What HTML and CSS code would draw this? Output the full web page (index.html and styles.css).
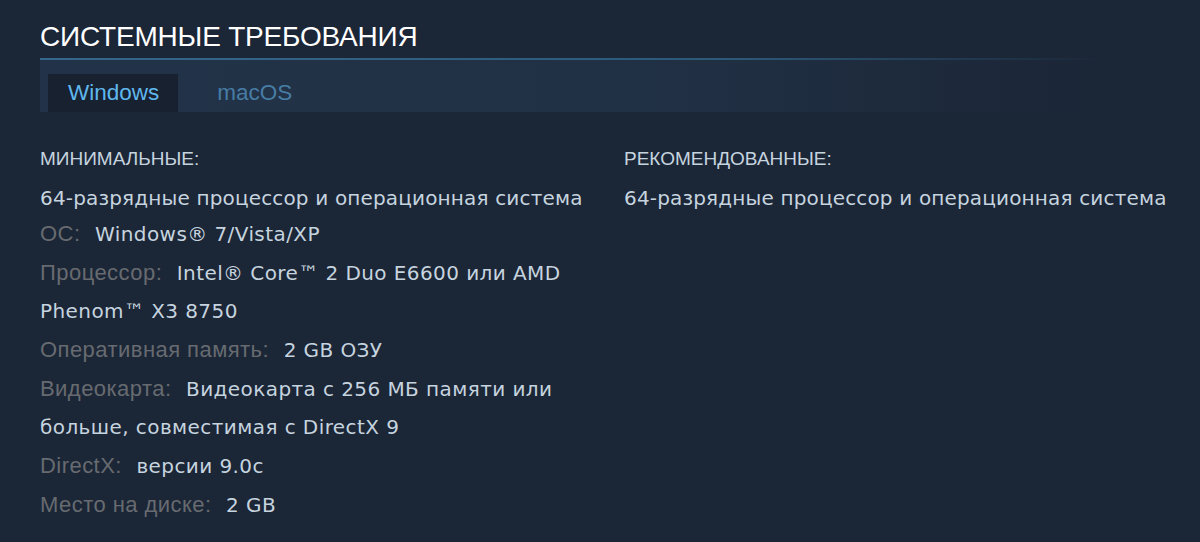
FILE: index.html
```html
<!DOCTYPE html>
<html lang="ru">
<head>
<meta charset="utf-8">
<link rel="stylesheet" href="styles.css">
</head>
<body>
<div class="sysreq">
  <h2 class="title">СИСТЕМНЫЕ ТРЕБОВАНИЯ</h2>
  <div class="tabs">
    <div class="tab active">Windows</div>
    <div class="tab">macOS</div>
  </div>
  <div class="cols">
    <div class="col">
      <div class="head">МИНИМАЛЬНЫЕ:</div>
      <ul class="list">
        <li>64-разрядные процессор и операционная система</li>
        <li><span class="lbl">ОС:</span> <span class="val">Windows® 7/Vista/XP</span></li>
        <li><span class="lbl">Процессор:</span> <span class="val">Intel® Core™ 2 Duo E6600 или AMD Phenom™ X3 8750</span></li>
        <li><span class="lbl">Оперативная память:</span> <span class="val">2 GB ОЗУ</span></li>
        <li><span class="lbl">Видеокарта:</span> <span class="val">Видеокарта с 256 МБ памяти или больше, совместимая с DirectX 9</span></li>
        <li><span class="lbl">DirectX:</span> <span class="val">версии 9.0c</span></li>
        <li><span class="lbl">Место на диске:</span> <span class="val">2 GB</span></li>
      </ul>
    </div>
    <div class="col">
      <div class="head">РЕКОМЕНДОВАННЫЕ:</div>
      <ul class="list">
        <li>64-разрядные процессор и операционная система</li>
      </ul>
    </div>
  </div>
</div>
</body>
</html>
```

FILE: styles.css
```css
html, body {
  margin: 0;
  padding: 0;
  background: #1b2637;
}
body {
  font-family: "Liberation Sans", Arial, sans-serif;
  color: #c6d4df;
}
.sysreq {
  padding: 20px 0 0 40px;
}
.title {
  width: 1070px;
  margin: 0;
  font-family: "Liberation Sans", Arial, sans-serif;
  font-weight: normal;
  font-size: 28px;
  letter-spacing: -0.2px;
  line-height: 34px;
  color: #ffffff;
  padding-bottom: 6px;
  background: linear-gradient(to right, #35678a 0%, #2d5878 65%, rgba(45,88,120,0) 100%) no-repeat left bottom / 100% 2px;
}
.tabs {
  width: 1060px;
  display: flex;
  gap: 19px;
  height: 52px;
  padding: 14px 0 0 8px;
  box-sizing: border-box;
  background: linear-gradient(to right, #223248 0%, #213145 55%, rgba(33,49,69,0) 100%);
}
.tab {
  font-size: 22.5px;
  line-height: 38px;
  padding: 0 19px 0 20px;
  color: #477ca4;
}
.tab.active {
  background: #172130;
  color: #5fb7ed;
}
.cols {
  display: grid;
  grid-template-columns: 560px 1fr;
  column-gap: 24px;
  padding-top: 35px;
}
.head {
  font-size: 19px;
  line-height: 24px;
  color: #c6d4df;
  margin-bottom: 11px;
}
.list {
  list-style: none;
  margin: 0;
  padding: 0;
  font-family: "DejaVu Sans", Verdana, sans-serif;
  font-size: 20px;
  letter-spacing: 0.16px;
  line-height: 38px;
  color: #c6d4df;
}
.list li {
  margin-bottom: 1px;
}
.list li:first-child {
  line-height: 32px;
}
.val {
  letter-spacing: 0.42px;
}
.lbl {
  font-family: "Liberation Sans", Arial, sans-serif;
  font-size: 22px;
  letter-spacing: 0.45px;
  color: #676b70;
  margin-right: 8px;
}
```
